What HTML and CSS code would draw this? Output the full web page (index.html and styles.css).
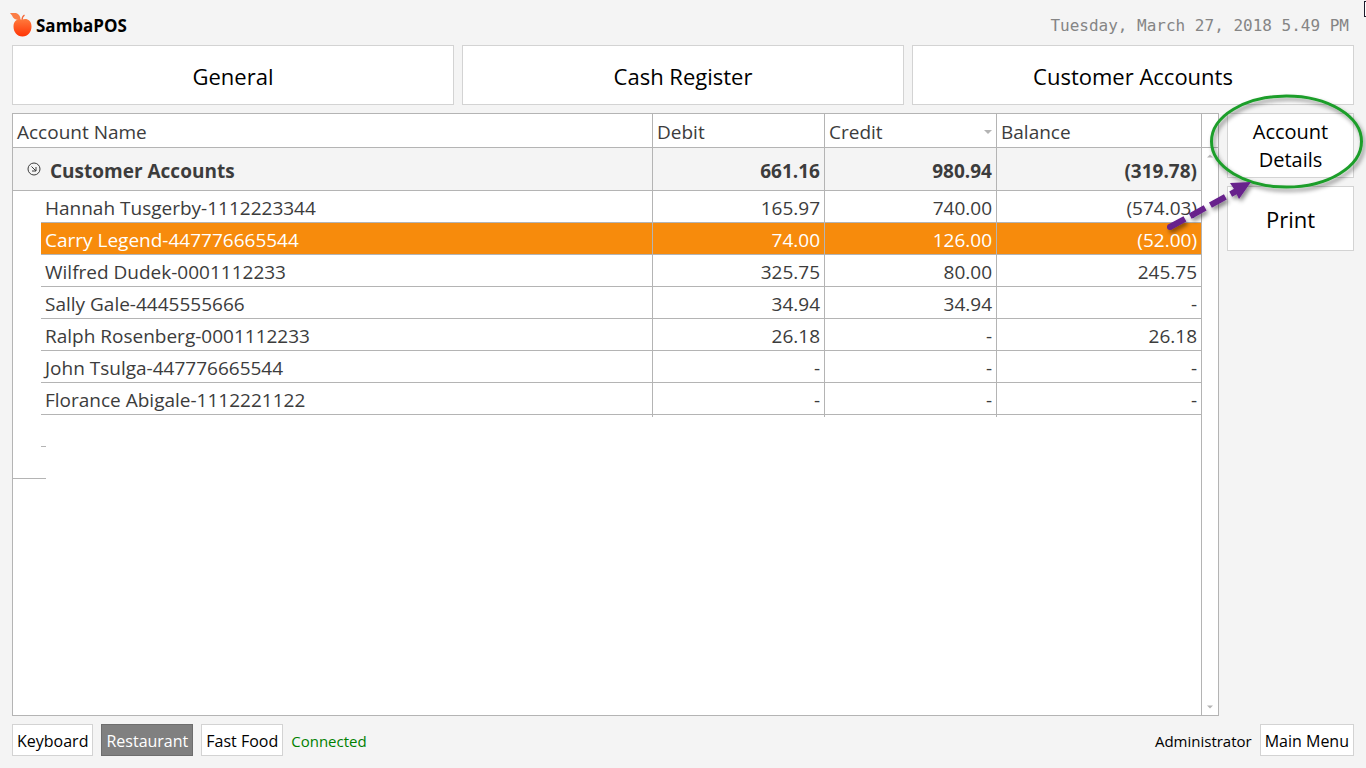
FILE: index.html
```
<!DOCTYPE html>
<html lang="en">
<head>
<meta charset="utf-8">
<title>SambaPOS</title>
<link rel="stylesheet" href="styles.css">
</head>
<body>
<div class="app">
  <header class="topbar">
    <div class="brand">
      <svg class="brand-icon" viewBox="0 0 24 26" aria-hidden="true">
        <defs>
          <linearGradient id="fruit" x1="0" y1="0" x2="0" y2="1">
            <stop offset="0" stop-color="#ff7a3c"/>
            <stop offset="1" stop-color="#ff3405"/>
          </linearGradient>
        </defs>
        <path fill="#fb7d45" d="M0 1L6 1C9 2 10.500 4 10.500 8C7 8.500 3 7 2 3.500Z"/>
        <path fill="none" stroke="#f5693a" stroke-width="1.300" d="M12 8.500C12 6 12.800 4 14.500 3"/>
        <path fill="url(#fruit)" d="M12 8C15 6 21.500 7 21.500 14.500C21.500 20 18 24.500 12.500 24.500C7 24.500 3.500 20 3.500 14.500C3.500 8 9 6 12 8Z"/>
      </svg>
      <span class="brand-name">SambaPOS</span>
    </div>
    <time class="clock" datetime="2018-03-27T17:49">Tuesday, March 27, 2018 5.49 PM</time>
    <span class="window-corner"></span>
  </header>

  <nav class="tabs">
    <button class="btn tab">General</button>
    <button class="btn tab">Cash Register</button>
    <button class="btn tab">Customer Accounts</button>
  </nav>

  <main class="content">
    <section class="panel">
      <div class="panel-body">
        <table class="accounts">
          <colgroup>
            <col class="col-indent"><col><col class="col-amount"><col class="col-amount"><col class="col-balance">
          </colgroup>
          <thead>
            <tr>
              <th colspan="2">Account Name</th>
              <th>Debit</th>
              <th><span class="sorted">Credit <svg class="tri" viewBox="0 0 8 4" aria-hidden="true"><path d="M0 0H8L4 4Z"/></svg></span></th>
              <th>Balance</th>
            </tr>
          </thead>
          <tbody>
            <tr class="group">
              <td colspan="2"><span class="group-name">
                <svg class="expander" viewBox="0 0 14 14" aria-hidden="true"><circle cx="7" cy="7" r="6"/><path d="M4.500 4.500L9 9M9 5V9H5"/></svg>
                Customer Accounts</span></td>
              <td>661.16</td><td>980.94</td><td>(319.78)</td>
            </tr>
            <tr><td></td><td>Hannah Tusgerby-1112223344</td><td>165.97</td><td>740.00</td><td>(574.03)</td></tr>
            <tr class="selected"><td></td><td>Carry Legend-447776665544</td><td>74.00</td><td>126.00</td><td>(52.00)</td></tr>
            <tr><td></td><td>Wilfred Dudek-0001112233</td><td>325.75</td><td>80.00</td><td>245.75</td></tr>
            <tr><td></td><td>Sally Gale-4445555666</td><td>34.94</td><td>34.94</td><td>-</td></tr>
            <tr><td></td><td>Ralph Rosenberg-0001112233</td><td>26.18</td><td>-</td><td>26.18</td></tr>
            <tr><td></td><td>John Tsulga-447776665544</td><td>-</td><td>-</td><td>-</td></tr>
            <tr><td></td><td>Florance Abigale-1112221122</td><td>-</td><td>-</td><td>-</td></tr>
            <tr class="tail"><td></td><td></td><td></td><td></td><td></td></tr>
          </tbody>
        </table>
        <div class="row-end row-end-first"></div>
        <div class="row-end"></div>
      </div>
      <div class="rail">
        <div class="rail-head"></div>
        <div class="rail-track">
          <svg class="tri small" viewBox="0 0 8 4" aria-hidden="true"><path d="M0 4H8L4 0Z"/></svg>
          <svg class="tri small" viewBox="0 0 8 4" aria-hidden="true"><path d="M0 0H8L4 4Z"/></svg>
        </div>
      </div>
    </section>

    <aside class="actions">
      <button class="btn action">Account<br>Details</button>
      <button class="btn action print">Print</button>
      <svg class="callout" viewBox="0 0 206 155" aria-hidden="true">
        <defs>
          <filter id="shade" x="-10%" y="-10%" width="120%" height="130%">
            <feDropShadow dx="2" dy="3" stdDeviation="2" flood-color="#000" flood-opacity=".45"/>
          </filter>
        </defs>
        <g filter="url(#shade)">
          <ellipse cx="126.500" cy="56.500" rx="75" ry="45.500" fill="none" stroke="#1f9e2c" stroke-width="3"/>
          <path d="M10 142L80 104" fill="none" stroke="#67208c" stroke-width="6" stroke-dasharray="17 6"/>
          <circle cx="10" cy="142" r="3" fill="#67208c"/>
          <path d="M91 97L70 98L74 104L79 114Z" fill="#67208c"/>
        </g>
      </svg>
    </aside>
  </main>

  <footer class="statusbar">
    <button class="btn foot">Keyboard</button>
    <button class="btn foot active">Restaurant</button>
    <button class="btn foot">Fast Food</button>
    <span class="status">Connected</span>
    <span class="user">Administrator</span>
    <button class="btn foot">Main Menu</button>
  </footer>
</div>
</body>
</html>
```
FILE: styles.css
```
* { box-sizing: border-box; }

body {
  margin: 0;
  background: #f4f4f4;
  color: #000;
  font-family: "Segoe UI", "Open Sans", "Noto Sans", sans-serif;
}

.app {
  display: flex;
  flex-direction: column;
  gap: 8px;
  min-height: 100vh;
  padding: 9px 12px 12px;
}

/* Top bar */
.topbar {
  display: flex;
  align-items: center;
  justify-content: space-between;
  height: 28px;
  padding-right: 5px;
}
.brand { display: flex; align-items: center; gap: 2px; margin-left: -2px; }
.brand-icon { width: 24px; height: 26px; margin-top: 3px; }
.brand-name { font-size: 17px; font-weight: 700; line-height: 28px; padding-top: 6px; }
.clock {
  color: #858585;
  font-family: Consolas, "DejaVu Sans Mono", monospace;
  font-size: 16px;
  line-height: 20px;
  padding-top: 6px;
}
.window-corner {
  position: absolute;
  top: 1px;
  right: 0;
  width: 2px;
  height: 16px;
  border: 1px solid #1b1b2b;
  border-right: 0;
  background: #fff;
}

/* Buttons */
.btn {
  border: 1px solid #d3d3d3;
  border-radius: 0;
  background: #fff;
  color: #000;
  font-family: inherit;
  text-align: center;
}
.tabs { display: flex; gap: 8px; }
.tab { flex: 1; height: 60px; padding: 2px 0 0; font-size: 22px; line-height: 30px; }

/* Accounts grid */
.content { display: flex; flex: 1; gap: 8px; }
.panel { display: flex; flex: 1; border: 1px solid #b4b4b4; background: #fff; }
.panel-body { flex: 1; }

.accounts {
  width: 100%;
  table-layout: fixed;
  border-collapse: separate;
  border-spacing: 0;
  color: #3c3c3c;
  font-size: 19px;
  line-height: 24px;
}
.col-indent { width: 28px; }
.col-amount { width: 172px; }
.col-balance { width: 204px; }

.accounts th, .accounts td {
  height: 32px;
  padding: 3px 4px 0;
  border-right: 1px solid #b4b4b4;
  border-bottom: 1px solid #b4b4b4;
  font-weight: 400;
  text-align: right;
  white-space: nowrap;
}
.accounts th { height: 34px; text-align: left; }
.accounts th:last-child, .accounts td:last-child { border-right: 0; }
.accounts td:nth-child(2) { text-align: left; }
.accounts td:first-child:empty { border: 0; }
.sorted { display: flex; align-items: center; justify-content: space-between; }

.accounts .group td { height: 43px; background: #f4f4f4; font-weight: 700; }
.accounts .group td:first-child { text-align: left; }
.accounts .group td:nth-child(2) { text-align: right; }
.group-name { display: flex; align-items: center; gap: 9px; padding-left: 10px; }
.expander { width: 14px; height: 14px; margin-bottom: 3px; fill: none; stroke: #3c3c3c; stroke-width: 1; }

.accounts .selected td:not(:first-child) { background: #f78b0c; color: #fff; }
.accounts .tail td { height: 2px; padding: 0; border-bottom: 0; }

.row-end { width: 33px; height: 32px; border-bottom: 1px solid #b4b4b4; }
.row-end-first { width: 5px; height: 30px; margin-left: 28px; }

.tri { width: 8px; height: 4px; fill: #b4b4b4; }
.tri.small { width: 6px; height: 4px; }
.rail { display: flex; flex-direction: column; width: 17px; border-left: 1px solid #b4b4b4; }
.rail-head { height: 34px; border-bottom: 1px solid #b4b4b4; }
.rail-track {
  display: flex;
  flex: 1;
  flex-direction: column;
  align-items: center;
  justify-content: space-between;
  padding: 6px 0;
}

/* Side actions */
.actions { position: relative; display: flex; flex-direction: column; gap: 8px; width: 127px; }
.action { height: 65px; padding: 0; font-size: 20px; line-height: 28px; }
.print { font-size: 22px; }
.callout {
  position: absolute;
  top: -28px;
  left: -67px;
  width: 206px;
  height: 155px;
  pointer-events: none;
}

/* Status bar */
.statusbar { display: flex; align-items: center; gap: 8px; }
.foot { height: 32px; padding: 1px 4px 0; font-size: 16px; line-height: 24px; }
.foot.active { border-color: #6e6e6e; background: #808080; color: #fff; }
.status, .user { padding-top: 2px; font-size: 15px; line-height: 20px; }
.status { color: #008000; }
.user { margin-left: auto; }
```
